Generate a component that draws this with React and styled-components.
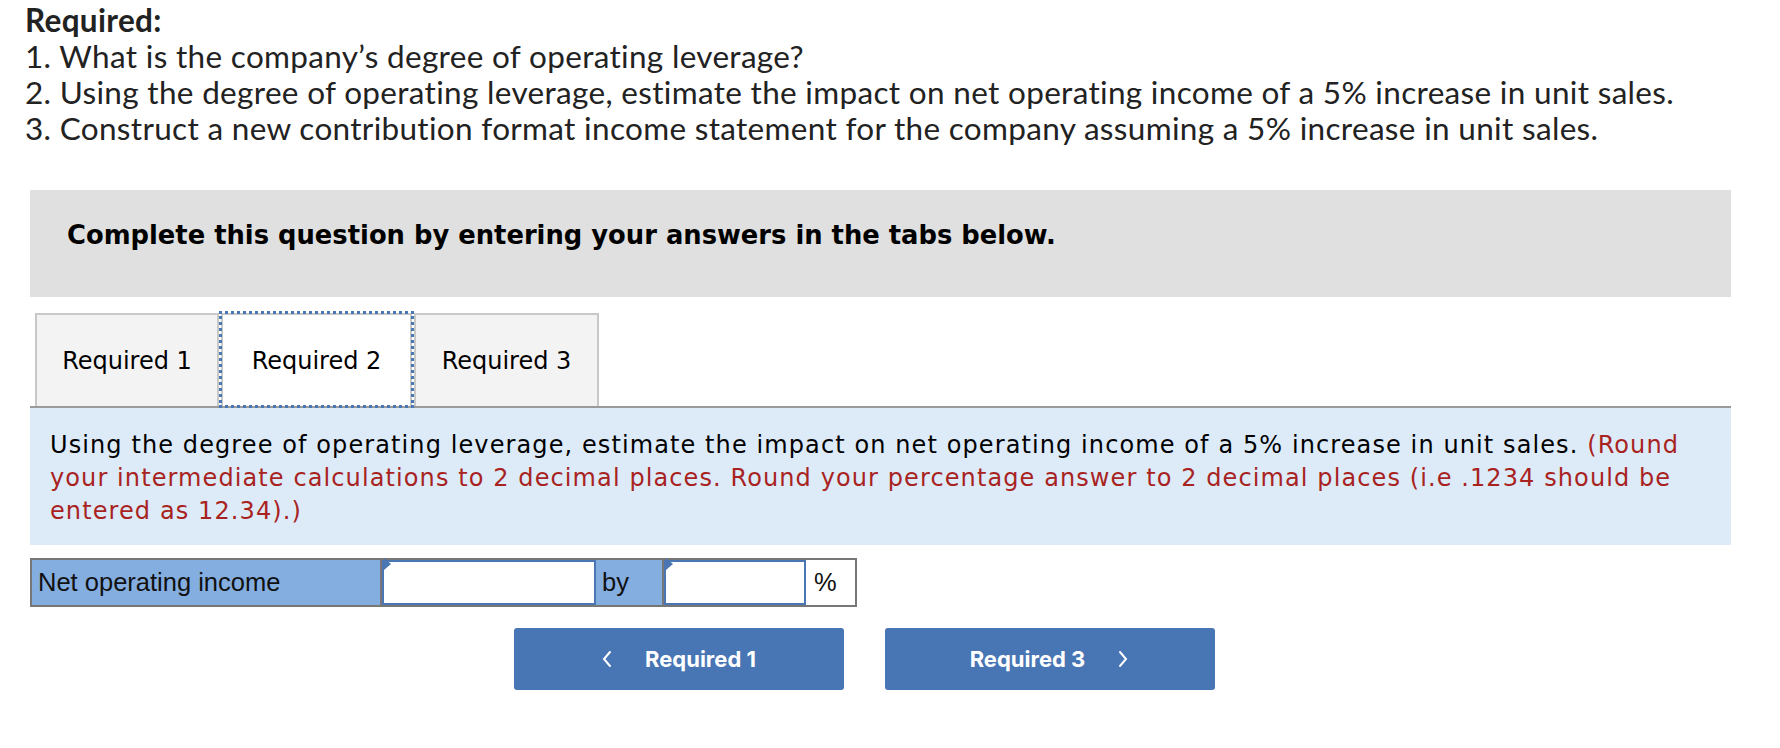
import styled, { createGlobalStyle } from 'styled-components'

const GlobalStyle = createGlobalStyle`
    html, body {
        margin: 0;
        padding: 0;
        background: #ffffff;
    }
`

const Page = styled.div`
    width: 1780px;
    padding-top: 2px;
`

const Intro = styled.div`
    padding-left: 25px;
    font-family: Lato, 'Open Sans', sans-serif;
    font-size: 31.5px;
    letter-spacing: 0.32px;
    line-height: 36px;
    color: #222;

    .title {
        font-weight: 700;
    }
`

const Main = styled.div`
    margin: 44px 49px 0 30px;
`

const Banner = styled.div`
    height: 107px;
    box-sizing: border-box;
    padding: 31px 37px;
    background: #e0e0e0;
    font-family: 'DejaVu Sans', Verdana, sans-serif;
    font-weight: 700;
    font-size: 25.8px;
    line-height: 28px;
    color: #000;
`

const TabBar = styled.div`
    display: flex;
    margin-top: 16px;
    padding-left: 5px;
    border-bottom: 2px solid #9a9a9a;
`

const Tab = styled.div`
    display: flex;
    align-items: center;
    justify-content: center;
    box-sizing: border-box;
    height: 93px;
    width: ${(p) => p.$width}px;
    margin-right: 2px;
    border: 2px solid #c8c8c8;
    border-bottom: none;
    background: ${(p) => (p.$active ? '#ffffff' : '#f3f3f3')};
    font-family: 'DejaVu Sans', Verdana, sans-serif;
    font-size: 24px;
    color: #000;
    ${(p) => p.$active && 'outline: 3px dotted #4a78b6; outline-offset: -1px;'}
`

const Prompt = styled.div`
    background: #ddebf8;
    padding: 21px 40px 17px 20px;
    font-family: 'DejaVu Sans', Verdana, sans-serif;
    font-size: 24px;
    letter-spacing: 1.1px;
    line-height: 33px;
    color: #000;

    .note {
        color: #a8231f;
    }
`

const AnswerRow = styled.div`
    display: flex;
    margin-top: 13px;
    width: fit-content;
    border: 2px solid #777777;
    font-family: 'Liberation Sans', Arial, sans-serif;
    font-size: 25.5px;
    color: #111;
`

const Label = styled.div`
    display: flex;
    align-items: center;
    box-sizing: border-box;
    width: ${(p) => p.$width}px;
    height: 45px;
    padding-left: 6px;
    background: #84ade0;
    border-right: 2px solid #777777;
`

const InputCell = styled.div`
    position: relative;
    box-sizing: border-box;
    width: ${(p) => p.$width}px;
    height: 45px;
    border: 2px solid #4a77b4;
    background: #fff;

    &::before {
        content: '';
        position: absolute;
        top: 0;
        left: 0;
        border-top: 6px solid transparent;
        border-bottom: 6px solid transparent;
        border-left: 7px solid #4a77b4;
        transform: translateY(-4px);
    }
`

const Unit = styled.div`
    display: flex;
    align-items: center;
    box-sizing: border-box;
    width: ${(p) => p.$width}px;
    height: 45px;
    padding-left: 8px;
    background: #fff;
`

const Nav = styled.div`
    display: flex;
    justify-content: center;
    gap: 41px;
    margin-top: 21px;
    padding-right: 33px;
`

const NavButton = styled.button`
    display: flex;
    align-items: center;
    justify-content: center;
    gap: 32px;
    width: 330px;
    height: 62px;
    padding: 0;
    border: none;
    border-radius: 3px;
    background: #4875b4;
    color: #fff;
    font-family: Inter, Roboto, sans-serif;
    font-weight: 700;
    font-size: 22px;

    svg {
        width: 12px;
        height: 20px;
    }
`

const Chevron = ({ dir }) => (
    <svg viewBox="0 0 12 20" fill="none" stroke="#fff" strokeWidth="2" strokeLinecap="round">
        {dir === 'left' ? <polyline points="9,3 3,10 9,17" /> : <polyline points="3,3 9,10 3,17" />}
    </svg>
)

const App = () => {
    return (
        <>
            <GlobalStyle />
            <Page>
                <Intro>
                    <div className="title">Required:</div>
                    <div>1. What is the company’s degree of operating leverage?</div>
                    <div>
                        2. Using the degree of operating leverage, estimate the impact on net operating income of a
                        5% increase in unit sales.
                    </div>
                    <div>
                        3. Construct a new contribution format income statement for the company assuming a 5%
                        increase in unit sales.
                    </div>
                </Intro>
                <Main>
                    <Banner>Complete this question by entering your answers in the tabs below.</Banner>
                    <TabBar>
                        <Tab $width={184}>Required 1</Tab>
                        <Tab $width={191} $active>
                            Required 2
                        </Tab>
                        <Tab $width={185}>Required 3</Tab>
                    </TabBar>
                    <Prompt>
                        Using the degree of operating leverage, estimate the impact on net operating income of a 5%
                        increase in unit sales.{' '}
                        <span className="note">
                            (Round your intermediate calculations to 2 decimal places. Round your percentage answer
                            to 2 decimal places (i.e .1234 should be entered as 12.34).)
                        </span>
                    </Prompt>
                    <AnswerRow>
                        <Label $width={350}>Net operating income</Label>
                        <InputCell $width={214} />
                        <Label $width={68}>by</Label>
                        <InputCell $width={142} />
                        <Unit $width={49}>%</Unit>
                    </AnswerRow>
                    <Nav>
                        <NavButton>
                            <Chevron dir="left" />
                            Required 1
                        </NavButton>
                        <NavButton>
                            Required 3
                            <Chevron dir="right" />
                        </NavButton>
                    </Nav>
                </Main>
            </Page>
        </>
    )
}

export default App
